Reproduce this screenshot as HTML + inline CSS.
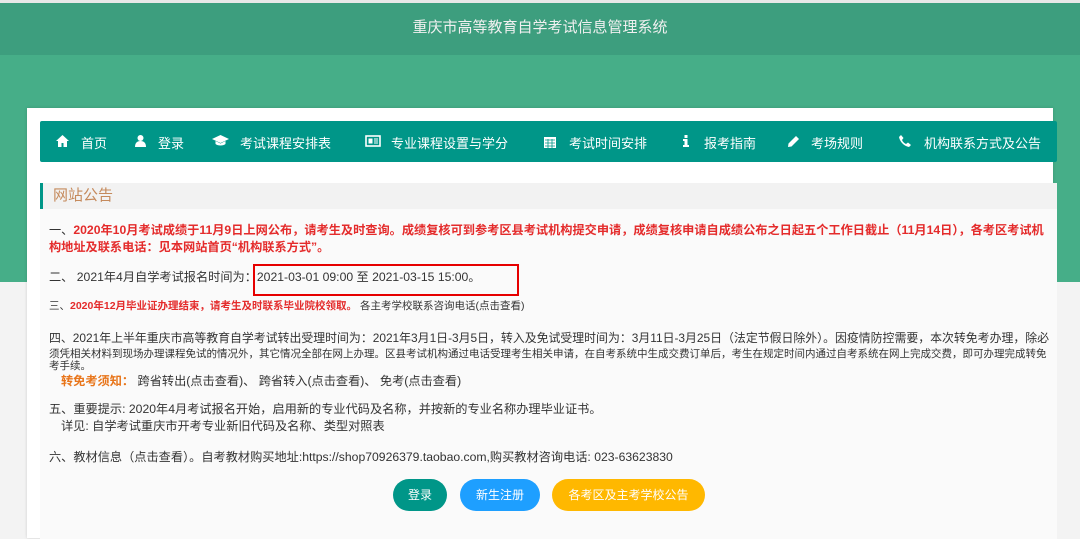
<!DOCTYPE html>
<html><head><meta charset="utf-8"><style>
*{margin:0;padding:0;box-sizing:border-box}
body{width:1080px;height:532px;overflow:hidden;background:#f3f3f3;font-family:"Liberation Sans","Noto Sans CJK SC",sans-serif;position:relative}
.top{position:absolute;left:0;top:3px;width:1080px;height:52px;background:#3d9e7e;text-align:center;line-height:50px;font-size:15px;color:#f0f0f0}
.band{position:absolute;left:0;top:55px;width:1080px;height:227px;background:#46ae88}
.line{position:absolute;left:0;top:0;width:1080px;height:3px;background:#e8e8e8}
.card{position:absolute;left:27px;top:108px;width:1026px;height:430px;background:#fff;box-shadow:0 0 3px rgba(0,0,0,.15)}
.nav{position:absolute;left:40px;top:121px;width:1017px;height:41px;background:#009688;border-radius:2px;color:#fff;font-size:13px}
.nav span{position:absolute;top:12px;white-space:nowrap}
.nav svg{position:absolute;top:14px}
.ttl{position:absolute;left:40px;top:183px;width:1017px;height:26px;background:#f2f2f2;border-left:3px solid #009688;color:#c58a5c;font-size:15px;line-height:26px;padding-left:10px}
.content{position:absolute;left:40px;top:209px;width:1017px;height:330px;background:#fafafa;font-size:12.2px;color:#333}
.p{position:absolute;left:9px;white-space:nowrap;line-height:17px}
.r{color:#e42b2b;font-weight:bold}
.btn{position:absolute;top:479px;height:32px;line-height:32px;border-radius:16px;color:#fff;font-size:12px;text-align:center}
</style></head><body>
<div class="line"></div>
<div class="top">重庆市高等教育自学考试信息管理系统</div>
<div class="band"></div>
<div class="card"></div>
<div class="nav">
<svg style="left:16px" width="13" height="12" viewBox="0 0 13 12"><path d="M6.5 0L0 6h2v6h3.5V8h2v4H11V6h2z" fill="#fff"/></svg><span style="left:41px">首页</span>
<svg style="left:95px" width="11" height="12" viewBox="0 0 11 12"><circle cx="5.5" cy="3" r="3" fill="#fff"/><path d="M0 12c0-4 2-6 5.5-6S11 8 11 12z" fill="#fff"/></svg><span style="left:118px">登录</span>
<svg style="left:172px" width="17" height="11" viewBox="0 0 17 11"><path d="M8.5 0L0 4l8.5 4L17 4zM3.5 6v3c2 2 8 2 10 0V6l-5 2.5z" fill="#fff"/></svg><span style="left:200px">考试课程安排表</span>
<svg style="left:325px" width="16" height="12" viewBox="0 0 16 12"><rect x="1" y="1" width="14" height="10" fill="none" stroke="#fff" stroke-width="1.6"/><rect x="3.5" y="3.5" width="4" height="5" fill="#fff"/><path d="M9 4h4M9 6h4M9 8h4" stroke="#fff"/></svg><span style="left:351px">专业课程设置与学分</span>
<svg style="left:504px" width="12" height="13" viewBox="0 0 12 13"><rect x="0" y="2" width="12" height="11" fill="#fff"/><path d="M1 5h10M1 8h10M1 11h10M4 4v9M8 4v9" stroke="#009688" stroke-width=".8"/></svg><span style="left:529px">考试时间安排</span>
<svg style="left:643px" width="6" height="12" viewBox="0 0 6 12"><rect x="1.5" y="0" width="3" height="3" fill="#fff"/><path d="M0 4h4.5v6H6v2H0v-2h1.5V6H0z" fill="#fff"/></svg><span style="left:664px">报考指南</span>
<svg style="left:747px" width="13" height="13" viewBox="0 0 13 13"><path d="M9 1l3 3-7.5 7.5L1 12l.5-3.5z" fill="#fff"/></svg><span style="left:771px">考场规则</span>
<svg style="left:859px" width="12" height="12" viewBox="0 0 12 12"><path d="M2 0l2.5 3-1.5 2c1 2 2 3 4 4l2-1.5L12 10l-2 2C5 11 1 7 0 2z" fill="#fff"/></svg><span style="left:884px">机构联系方式及公告</span>
</div>
<div class="ttl">网站公告</div>
<div class="content">
<div class="p" style="top:13px">一、<span class="r">2020年10月考试成绩于11月9日上网公布，请考生及时查询。成绩复核可到参考区县考试机构提交申请，成绩复核申请自成绩公布之日起五个工作日截止（11月14日），各考区考试机</span></div>
<div class="p" style="top:30px"><span class="r">构地址及联系电话：见本网站首页“机构联系方式”。</span></div>
<div class="p" style="top:60px">二、 2021年4月自学考试报名时间为：2021-03-01 09:00 至 2021-03-15 15:00。</div>
<div style="position:absolute;left:213px;top:55px;width:266px;height:32px;border:2px solid #e60000"></div>
<div class="p" style="top:89px;font-size:10.5px">三、<span class="r">2020年12月毕业证办理结束，请考生及时联系毕业院校领取。</span> 各主考学校联系咨询电话(点击查看)</div>
<div class="p" style="top:121px;font-size:11.9px">四、2021年上半年重庆市高等教育自学考试转出受理时间为：2021年3月1日-3月5日，转入及免试受理时间为：3月11日-3月25日（法定节假日除外）。因疫情防控需要，本次转免考办理，除必</div>
<div class="p" style="top:137px;font-size:10.5px">须凭相关材料到现场办理课程免试的情况外，其它情况全部在网上办理。区县考试机构通过电话受理考生相关申请，在自考系统中生成交费订单后，考生在规定时间内通过自考系统在网上完成交费，即可办理完成转免</div>
<div class="p" style="top:149px;font-size:10.5px">考手续。</div>
<div class="p" style="top:164px;left:21px"><span style="color:#e8751a;font-weight:bold">转免考须知：</span> 跨省转出(点击查看)、 跨省转入(点击查看)、 免考(点击查看)</div>
<div class="p" style="top:192px">五、重要提示: 2020年4月考试报名开始，启用新的专业代码及名称，并按新的专业名称办理毕业证书。</div>
<div class="p" style="top:209px;left:21px">详见: 自学考试重庆市开考专业新旧代码及名称、类型对照表</div>
<div class="p" style="top:240px">六、教材信息（点击查看）。自考教材购买地址:https://shop70926379.taobao.com,购买教材咨询电话: 023-63623830</div>
</div>
<div class="btn" style="left:393px;width:54px;background:#009688">登录</div>
<div class="btn" style="left:460px;width:80px;background:#1e9fff">新生注册</div>
<div class="btn" style="left:552px;width:153px;background:#ffb800">各考区及主考学校公告</div>
</body></html>
